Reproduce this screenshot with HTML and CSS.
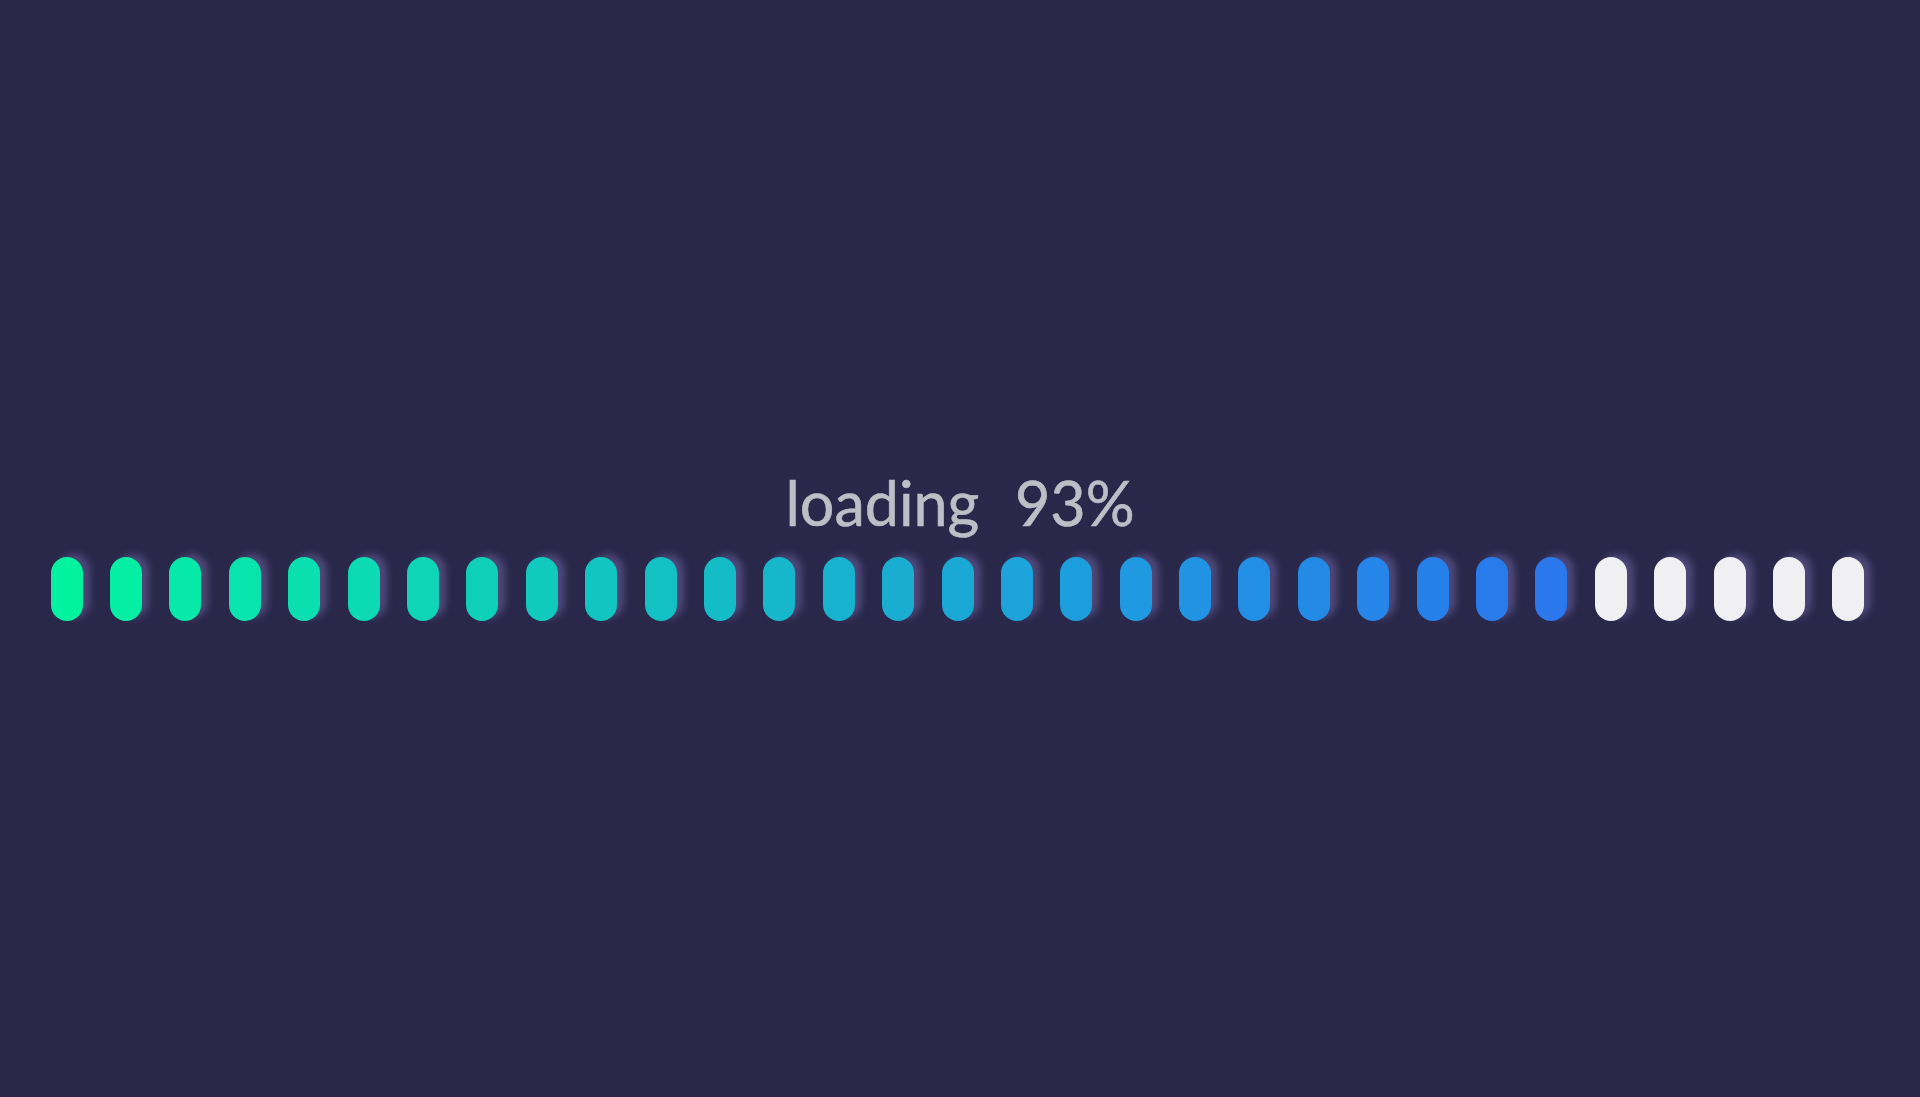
FILE: index.html
```html
<!DOCTYPE html>
<html lang="en">
<head>
    <meta charset="UTF-8">
    <meta name="viewport" content="width=device-width, initial-scale=1.0">
    <title>Loading</title>
    <link rel="stylesheet" href="styles.css">
</head>
<body>
    <div class="loader">
        <div class="loader-label">
            <span>loading</span>
            <span class="loader-value">93%</span>
        </div>
        <div class="loader-track">
            <div class="pill" style="background-color:#02f2a0"></div>
            <div class="pill" style="background-color:#04eea4"></div>
            <div class="pill" style="background-color:#06e9a8"></div>
            <div class="pill" style="background-color:#08e4ab"></div>
            <div class="pill" style="background-color:#0adfaf"></div>
            <div class="pill" style="background-color:#0bdab2"></div>
            <div class="pill" style="background-color:#0dd5b6"></div>
            <div class="pill" style="background-color:#0ed0b9"></div>
            <div class="pill" style="background-color:#10cbbd"></div>
            <div class="pill" style="background-color:#11c6c0"></div>
            <div class="pill" style="background-color:#13c1c4"></div>
            <div class="pill" style="background-color:#14bcc7"></div>
            <div class="pill" style="background-color:#16b7cb"></div>
            <div class="pill" style="background-color:#17b2ce"></div>
            <div class="pill" style="background-color:#19add2"></div>
            <div class="pill" style="background-color:#1aa8d5"></div>
            <div class="pill" style="background-color:#1ca3d9"></div>
            <div class="pill" style="background-color:#1d9edc"></div>
            <div class="pill" style="background-color:#1f99e0"></div>
            <div class="pill" style="background-color:#2094e2"></div>
            <div class="pill" style="background-color:#228fe4"></div>
            <div class="pill" style="background-color:#238ae6"></div>
            <div class="pill" style="background-color:#2585e8"></div>
            <div class="pill" style="background-color:#2680e9"></div>
            <div class="pill" style="background-color:#287beb"></div>
            <div class="pill" style="background-color:#2a78ec"></div>
            <div class="pill empty"></div>
            <div class="pill empty"></div>
            <div class="pill empty"></div>
            <div class="pill empty"></div>
            <div class="pill empty"></div>
        </div>
    </div>
</body>
</html>
```

FILE: styles.css
```css
body {
    font-family: Lato, "Open Sans", sans-serif;
    background-color: #29284a;
    display: flex;
    justify-content: center;
    align-items: center;
    height: 100vh;
    margin: 0;
}

.loader {
    display: flex;
    flex-direction: column;
    align-items: center;
    padding-bottom: 10px;
}

.loader-label {
    color: #bebec6;
    font-size: 61px;
    line-height: 74px;
    margin-bottom: 17px;
    -webkit-text-stroke: 0.6px #bebec6;
}

.loader-value {
    margin-left: 20px;
}

.loader-track {
    display: flex;
    gap: 27.4px;
    margin-right: 5px;
}

.pill {
    width: 32px;
    height: 64px;
    border-radius: 16px;
    box-shadow: 7px -3px 7px rgba(125, 110, 180, 0.45);
}

.pill.empty {
    background-color: #f0f0f2;
}
```
